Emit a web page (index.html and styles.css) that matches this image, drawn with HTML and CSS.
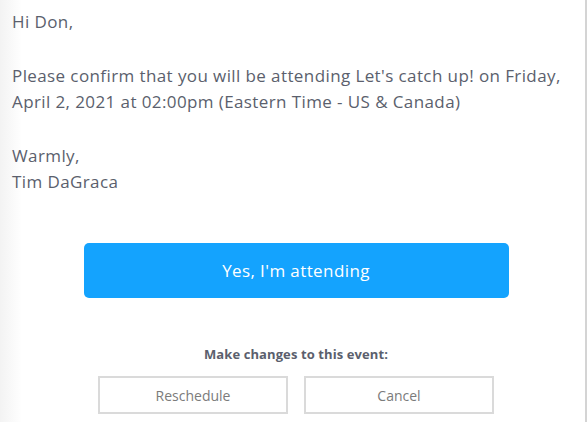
FILE: index.html
```html
<!DOCTYPE html>
<html>
<head>
<meta charset="utf-8">
<link rel="stylesheet" href="styles.css">
</head>
<body>
<div class="card">
  <div class="message">
    <p class="para">Hi Don,</p>
    <p class="para">Please confirm that you will be attending Let's catch up! on Friday, April 2, 2021 at 02:00pm (Eastern Time - US &amp; Canada)</p>
    <p class="para">Warmly,<br>Tim DaGraca</p>
  </div>
  <div class="actions">
    <a class="primary">Yes, I'm attending</a>
    <div class="changes-label">Make changes to this event:</div>
    <div class="secondary-row">
      <a class="secondary">Reschedule</a>
      <a class="secondary">Cancel</a>
    </div>
  </div>
</div>
</body>
</html>
```

FILE: styles.css
```css
html, body {
  margin: 0;
  padding: 0;
  background: #ffffff;
}
body {
  width: 588px;
  height: 422px;
  overflow: hidden;
  font-family: "Open Sans", Lato, sans-serif;
}
.card {
  width: 587px;
  height: 422px;
  border-right: 2px solid #d4d4d4;
  background: linear-gradient(to right, #f3f3f3 0px, #ffffff 22px);
  box-sizing: border-box;
}
.message {
  padding: 9px 12px 0 12px;
  color: #5b5f6d;
  font-size: 17px;
  line-height: 26px;
  letter-spacing: 0.4px;
}
.para {
  margin: 0 0 28px 0;
}
.actions {
  display: flex;
  flex-direction: column;
  align-items: center;
  padding-left: 7px;
}
.primary {
  display: flex;
  align-items: center;
  justify-content: center;
  width: 425px;
  height: 55px;
  margin-top: 20px;
  background: #14a3fe;
  border-radius: 5px;
  color: #ffffff;
  font-size: 17px;
  letter-spacing: 0.4px;
}
.changes-label {
  margin-top: 47px;
  font-size: 13px;
  font-weight: bold;
  color: #5b5f6d;
  letter-spacing: 0.1px;
}
.secondary-row {
  display: flex;
  gap: 16px;
  margin-top: 13px;
}
.secondary {
  display: flex;
  align-items: center;
  justify-content: center;
  width: 190px;
  height: 38px;
  box-sizing: border-box;
  border: 2px solid #dadada;
  color: #7b7b7b;
  font-size: 14px;
}
```
